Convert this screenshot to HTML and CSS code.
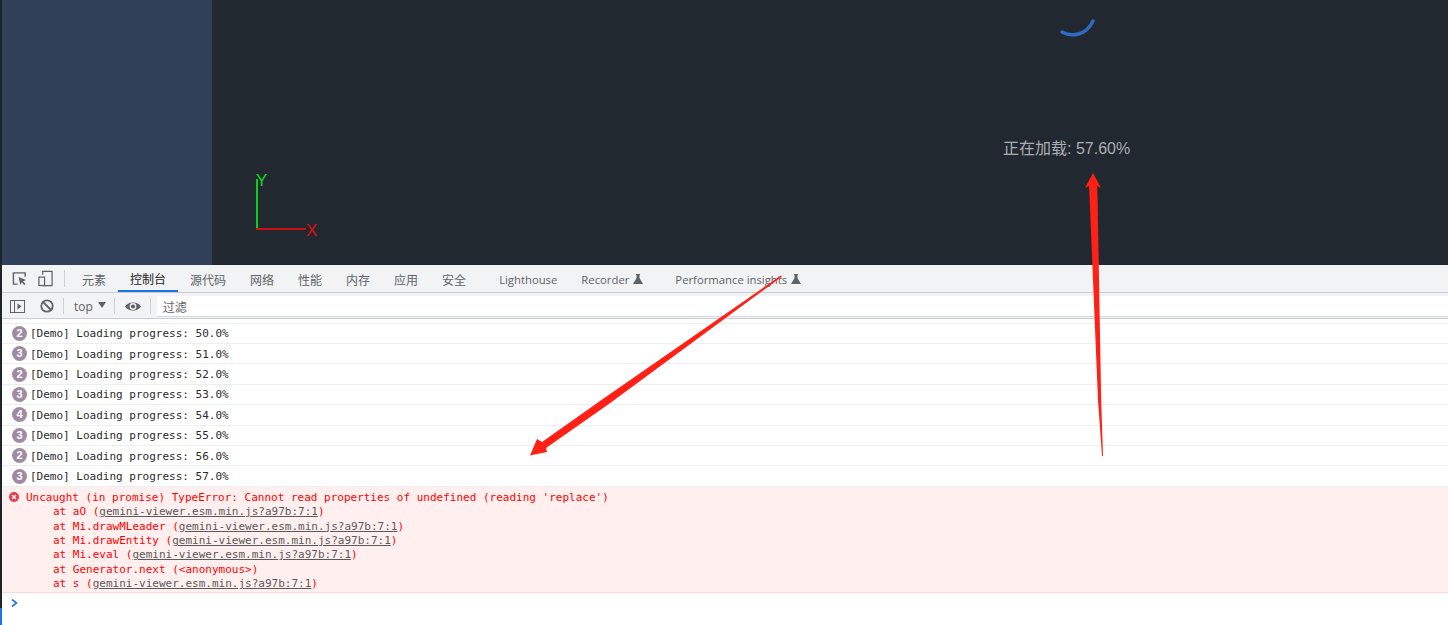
FILE: index.html
```html
<!DOCTYPE html>
<html lang="zh">
<head>
<meta charset="utf-8">
<title>DevTools</title>
<link rel="stylesheet" href="styles.css">
</head>
<body>
<div class="app">
  <div class="viewer">
    <div class="edge"></div>
    <div class="sidebar"></div>
    <div class="canvas">
      <svg class="spinner" width="40" height="24" viewBox="0 0 40 24"><path d="M3 18 C12 23 27 22 34 7" fill="none" stroke="#2b6cc0" stroke-width="3.4" stroke-linecap="round"/></svg>
      <div class="progress">正在加载: 57.60%</div>
      <svg class="axes" width="70" height="60" viewBox="0 0 70 60">
        <rect x="0" y="6" width="2" height="50" fill="#0fcb1c"/>
        <rect x="0" y="55" width="50" height="2" fill="#cb0f0f"/>
        <text x="0" y="13" class="axis-y">Y</text>
        <text x="50" y="63" class="axis-x">X</text>
      </svg>
    </div>
  </div>
  <div class="devtools">
    <div class="tabbar">
      <div class="tab-tools">
        <svg width="15" height="15" viewBox="0 0 16 16"><path d="M6 14H1.500V2H14V6" fill="none" stroke="#5f6368" stroke-width="1.500"/><path d="M7 6.500 15 9.500 11.800 11 14.500 14 13 15 10.500 12 8.800 15Z" fill="#5f6368"/></svg>
        <svg width="15" height="17" viewBox="0 0 16 18"><path d="M5 5V1.500H15V16.500H5" fill="none" stroke="#5f6368" stroke-width="1.300"/><rect x="1" y="7.500" width="6" height="9" fill="none" stroke="#5f6368" stroke-width="1.300"/></svg>
      </div>
      <div class="divider tall"></div>
      <div class="tabs">
        <span class="tab">元素</span>
        <span class="tab active">控制台</span>
        <span class="tab">源代码</span>
        <span class="tab">网络</span>
        <span class="tab">性能</span>
        <span class="tab">内存</span>
        <span class="tab">应用</span>
        <span class="tab">安全</span>
        <span class="tab latin first">Lighthouse</span>
        <span class="tab latin">Recorder <svg class="flask" width="10" height="10" viewBox="0 0 10 10"><path d="M3 0H7V1H6.500V4L10 10H0L3.500 4V1H3Z" fill="#5f6368"/></svg></span>
        <span class="tab latin wide">Performance insights <svg class="flask" width="10" height="10" viewBox="0 0 10 10"><path d="M3 0H7V1H6.500V4L10 10H0L3.500 4V1H3Z" fill="#5f6368"/></svg></span>
      </div>
    </div>
    <div class="filterbar">
      <svg class="sidebar-toggle" width="15" height="13" viewBox="0 0 15 13"><rect x="0.500" y="0.500" width="14" height="12" fill="none" stroke="#5f6368"/><rect x="4" y="0.500" width="1" height="12" fill="#5f6368"/><path d="M7.500 3.500 11.500 6.500 7.500 9.500Z" fill="#5f6368"/></svg>
      <svg class="block" width="14" height="14" viewBox="0 0 14 14"><circle cx="7" cy="7" r="5.700" fill="none" stroke="#5f6368" stroke-width="1.800"/><path d="M3 3 11 11" stroke="#5f6368" stroke-width="1.800"/></svg>
      <div class="divider"></div>
      <span class="context">top</span>
      <span class="caret"></span>
      <div class="divider"></div>
      <svg class="eye" width="16" height="11" viewBox="0 0 16 11"><path d="M0 5.500C3 0 13 0 16 5.500 13 11 3 11 0 5.500Z" fill="#5f6368"/><circle cx="8" cy="5.500" r="3.400" fill="#f1f3f4"/><circle cx="8" cy="5.500" r="2.100" fill="#5f6368"/></svg>
      <div class="divider"></div>
      <div class="filter">过滤</div>
    </div>
    <div class="gap"></div>
    <div class="log">
      <div class="row"><span class="badge">2</span><span class="msg">[Demo] Loading progress: 50.0%</span></div>
      <div class="row"><span class="badge">3</span><span class="msg">[Demo] Loading progress: 51.0%</span></div>
      <div class="row"><span class="badge">2</span><span class="msg">[Demo] Loading progress: 52.0%</span></div>
      <div class="row"><span class="badge">3</span><span class="msg">[Demo] Loading progress: 53.0%</span></div>
      <div class="row"><span class="badge">4</span><span class="msg">[Demo] Loading progress: 54.0%</span></div>
      <div class="row"><span class="badge">3</span><span class="msg">[Demo] Loading progress: 55.0%</span></div>
      <div class="row"><span class="badge">2</span><span class="msg">[Demo] Loading progress: 56.0%</span></div>
      <div class="row"><span class="badge">3</span><span class="msg">[Demo] Loading progress: 57.0%</span></div>
    </div>
    <div class="error">
      <svg class="err-icon" width="10" height="10" viewBox="0 0 10 10"><circle cx="5" cy="5" r="5" fill="#e8384a"/><path d="M3 3 7 7M7 3 3 7" stroke="#fff" stroke-width="1.400"/></svg>
      <div class="err-head">Uncaught (in promise) TypeError: Cannot read properties of undefined (reading 'replace')</div>
      <div class="err-line">at aO (<u>gemini-viewer.esm.min.js?a97b:7:1</u>)</div>
      <div class="err-line">at Mi.drawMLeader (<u>gemini-viewer.esm.min.js?a97b:7:1</u>)</div>
      <div class="err-line">at Mi.drawEntity (<u>gemini-viewer.esm.min.js?a97b:7:1</u>)</div>
      <div class="err-line">at Mi.eval (<u>gemini-viewer.esm.min.js?a97b:7:1</u>)</div>
      <div class="err-line">at Generator.next (&lt;anonymous&gt;)</div>
      <div class="err-line">at s (<u>gemini-viewer.esm.min.js?a97b:7:1</u>)</div>
    </div>
    <div class="prompt">
      <svg class="chevron" width="7" height="8" viewBox="0 0 7 8"><path d="M1 .5 5.500 4 1 7.500" fill="none" stroke="#1a73e8" stroke-width="1.600"/></svg>
    </div>
  </div>
  <div class="focus-mark"></div>
  <svg class="arrows" width="1448" height="625" viewBox="0 0 1448 625">
    <path d="M781.800 276.700 L609.500 403.400 L546 448 L547 452 L530 455.500 L537 439 L542 442 L605 397.600 L780.800 275.500 Z" fill="#ff2116"/>
    <path d="M1103 456 L1101.200 400 L1097.500 195 L1097 186 L1101 188 L1093 173 L1085 188 L1089 186 L1089.500 195 L1098 400 L1102 456 Z" fill="#ff2116"/>
  </svg>
</div>
</body>
</html>
```
FILE: styles.css
```css
* { box-sizing: border-box; }
html, body { margin: 0; padding: 0; height: 100%; overflow: hidden; background: #fff; }
.app { position: relative; width: 1448px; height: 625px; overflow: hidden; background: #1f2428; }
.viewer { display: flex; height: 265px; background: #212830; }
.edge { width: 2px; background: #1f2428; }
.sidebar { width: 210px; background: #2f4058; }
.canvas { position: relative; flex: 1; }
.spinner { position: absolute; left: 847px; top: 14px; }
.progress { position: absolute; left: 791px; top: 139px; font: 16px/20px "Liberation Sans", "Noto Sans CJK SC", sans-serif; color: #aaadb0; white-space: nowrap; }
.axes { position: absolute; left: 44px; top: 173px; overflow: visible; }
.axis-y { font: 17px "Liberation Sans", sans-serif; fill: #0fdc1f; }
.axis-x { font: 17px "Liberation Sans", sans-serif; fill: #dc1010; }

.devtools { height: 360px; margin-left: 2px; display: flex; flex-direction: column; font-family: "Noto Sans CJK SC", sans-serif; }
.tabbar { display: flex; align-items: center; height: 28px; background: #f1f3f4; border-bottom: 1px solid #cacdd1; flex: none; }
.tab-tools { display: flex; align-items: center; gap: 11px; padding-left: 10px; width: 62px; }
.divider { width: 1px; height: 16px; background: #cdd0d4; flex: none; }
.divider.tall { height: 17px; }
.tabs { display: flex; align-self: stretch; margin-left: 5px; }
.tab { display: flex; align-items: center; padding: 2px 12px 0; font-size: 12px; color: #5f6368; white-space: nowrap; height: 27px; gap: 4px; }
.tab.active { color: #202124; border-bottom: 2px solid #1a73e8; }
.tab.latin { font-family: "Open Sans", "Noto Sans", sans-serif; font-size: 11.3px; }
.tab.first { margin-left: 9px; }
.tab.wide { margin-left: 8px; }
.flask { margin-bottom: 2px; }

.filterbar { display: flex; align-items: center; height: 26px; flex: none; padding: 3px 0 2px 8px; background: #f1f3f4; border-bottom: 1px solid #cacdd1; }
.sidebar-toggle { flex: none; }
.block { margin-left: 15px; margin-right: 9px; flex: none; }
.context { margin-left: 10px; font: 12px "Open Sans", sans-serif; color: #5f6368; }
.caret { width: 0; height: 0; margin: 0 8px 2px 5px; border-left: 4px solid transparent; border-right: 4px solid transparent; border-top: 6px solid #5f6368; }
.eye { margin: 0 9px 0 10px; flex: none; }
.filter { flex: 1; height: 21px; margin-left: 6px; background: #fff; border-bottom: 1px solid #d7d9dc; font-size: 12px; line-height: 21px; color: #5f6368; padding-left: 6px; }
.gap { height: 4.6px; flex: none; border-bottom: 1px solid #eceef0; background: #fff; }

.log { flex: none; background: #fff; }
.row { display: flex; align-items: center; height: 20.4px; border-bottom: 1px solid #eceef0; padding-left: 10px; }
.badge { width: 15px; height: 15px; border-radius: 50%; background: #a08ba5; color: #fff; font: bold 11px/15px "Liberation Sans", sans-serif; text-align: center; flex: none; }
.msg { margin-left: 3px; margin-top: 2px; font: 11px/14px "DejaVu Sans Mono", monospace; color: #2b2b2b; white-space: pre; }

.error { position: relative; flex: none; height: 106px; padding: 4px 0 0 24px; background: #fff0ef; border-bottom: 1px solid #fdd6d5; font: 11px/14.4px "DejaVu Sans Mono", monospace; color: #ff0000; }
.err-head, .err-line { white-space: pre; }
.err-icon { position: absolute; left: 7px; top: 5px; }
.err-line { padding-left: 27px; }
.err-line u { color: #5a5a5a; }
.prompt { flex: 1; padding: 6px 0 0 9px; background: #fff; }
.chevron { display: block; }
.focus-mark { position: absolute; left: 0; top: 608px; width: 2px; height: 17px; background: #1a73e8; }
.arrows { position: absolute; left: 0; top: 0; pointer-events: none; }
```
